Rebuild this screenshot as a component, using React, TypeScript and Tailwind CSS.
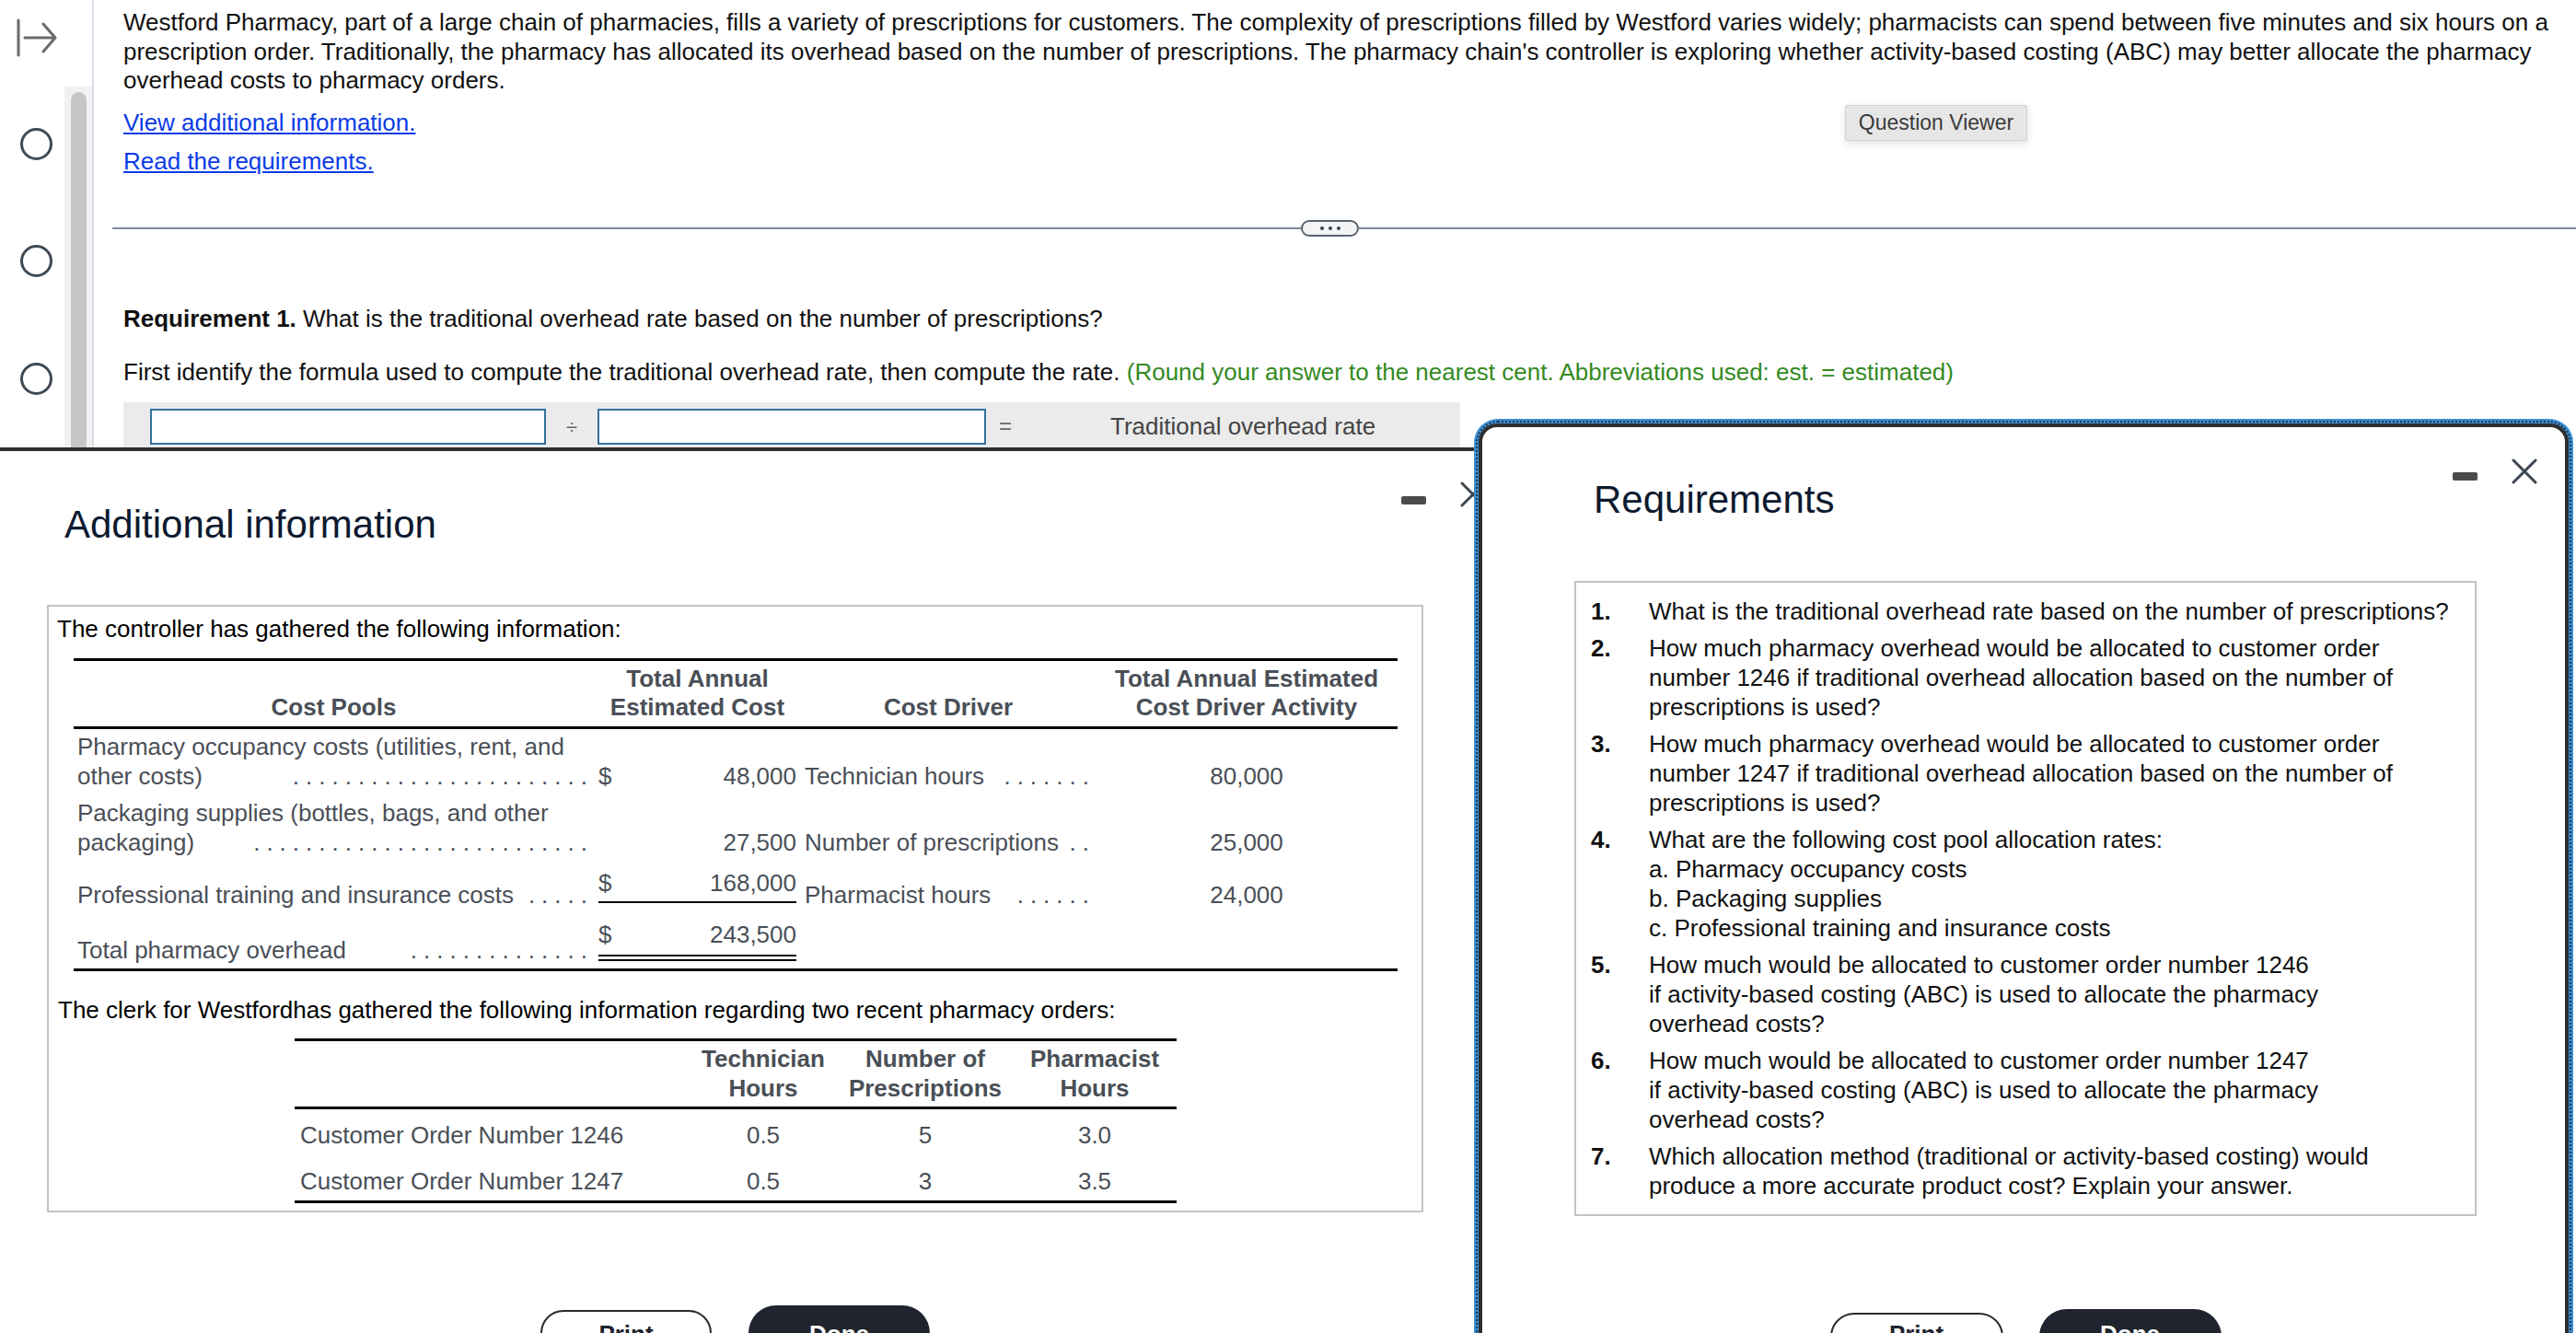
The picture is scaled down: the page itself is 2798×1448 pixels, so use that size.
import React from 'react';

// dotted leader used between a label and its amount
const Leader = ({ n }: { n: number }) => (
  <span className="whitespace-nowrap tracking-[7px]">{'.'.repeat(n)}</span>
);

const CloseIcon = () => (
  <svg width="28" height="28" viewBox="0 0 28 28" fill="none" stroke="#3d4652" strokeWidth="3" strokeLinecap="round">
    <path d="M2 2 L26 26 M26 2 L2 26" />
  </svg>
);

const Minimize = ({ className }: { className: string }) => (
  <div className={`h-[9px] w-[27px] rounded-[2px] bg-[#4b4b4b] ${className}`} />
);

const requirements: { n: string; lines: string[] }[] = [
  { n: '1.', lines: ['What is the traditional overhead rate based on the number of prescriptions?'] },
  {
    n: '2.',
    lines: [
      'How much pharmacy overhead would be allocated to customer order',
      'number 1246 if traditional overhead allocation based on the number of',
      'prescriptions is used?',
    ],
  },
  {
    n: '3.',
    lines: [
      'How much pharmacy overhead would be allocated to customer order',
      'number 1247 if traditional overhead allocation based on the number of',
      'prescriptions is used?',
    ],
  },
  {
    n: '4.',
    lines: [
      'What are the following cost pool allocation rates:',
      'a. Pharmacy occupancy costs',
      'b. Packaging supplies',
      'c. Professional training and insurance costs',
    ],
  },
  {
    n: '5.',
    lines: [
      'How much would be allocated to customer order number 1246',
      'if activity-based costing (ABC) is used to allocate the pharmacy',
      'overhead costs?',
    ],
  },
  {
    n: '6.',
    lines: [
      'How much would be allocated to customer order number 1247',
      'if activity-based costing (ABC) is used to allocate the pharmacy',
      'overhead costs?',
    ],
  },
  {
    n: '7.',
    lines: [
      'Which allocation method (traditional or activity-based costing) would',
      'produce a more accurate product cost? Explain your answer.',
    ],
  },
];

const orders = [
  { name: 'Customer Order Number 1246', tech: '0.5', rx: '5', pharm: '3.0' },
  { name: 'Customer Order Number 1247', tech: '0.5', rx: '3', pharm: '3.5' },
];

const App: React.FC = () => {
  return (
    <div className="relative h-[1448px] w-[2798px] overflow-hidden bg-white font-['Liberation_Sans',Arial,sans-serif] text-[26px] text-black">
      {/* Question page underneath the dialogs */}
      <div className="flex h-full">
        {/* step rail */}
        <div className="flex w-[70px] flex-col items-start">
          <svg className="ml-[18px] mt-[20px]" width="44" height="42" viewBox="0 0 44 42" fill="none" stroke="#6b6b6b" strokeWidth="3" strokeLinecap="round" strokeLinejoin="round">
            <path d="M2 2 V40 M9 21 H42 M29 6 L42 21 L29 36" />
          </svg>
          <div className="ml-[22px] mt-[77px] h-[35px] w-[35px] rounded-full border-[3px] border-[#3f4a55]" />
          <div className="ml-[22px] mt-[92px] h-[35px] w-[35px] rounded-full border-[3px] border-[#3f4a55]" />
          <div className="ml-[22px] mt-[93px] h-[35px] w-[35px] rounded-full border-[3px] border-[#3f4a55]" />
        </div>

        {/* scroll track */}
        <div className="w-[30px] pt-[94px]">
          <div className="h-full bg-[#f1f1f1] pt-[6px]">
            <div className="ml-[7px] h-full w-[17px] rounded-t-full bg-[#c6c6c6]" />
          </div>
        </div>
        <div className="w-[2px] bg-[#dcdce8]" />

        {/* question body */}
        <div className="flex flex-1 flex-col pl-[32px]">
          <p className="whitespace-nowrap pt-[9px] leading-[31.5px] text-[#111]">
            Westford Pharmacy, part of a large chain of pharmacies, fills a variety of prescriptions for customers. The complexity of prescriptions filled by Westford varies widely; pharmacists can spend between five minutes and six hours on a
            <br />
            prescription order. Traditionally, the pharmacy has allocated its overhead based on the number of prescriptions. The pharmacy chain's controller is exploring whether activity-based costing (ABC) may better allocate the pharmacy
            <br />
            overhead costs to pharmacy orders.
          </p>

          <div className="mt-[10px] flex items-start">
            <div className="flex flex-col gap-[10px] pt-[3px] leading-[32px]">
              <a href="#" className="text-[#0a3be6] underline">View additional information.</a>
              <a href="#" className="text-[#0a3be6] underline">Read the requirements.</a>
            </div>
            <button className="ml-auto mr-[596px] h-[39px] w-[198px] rounded-[2px] border border-[#d2d2d2] bg-[#e6e6e6] text-[23px] text-[#3a3a3a] shadow-[0_3px_10px_rgba(0,0,0,0.12)]">
              Question Viewer
            </button>
          </div>

          <div className="-ml-[12px] mt-[48px] flex h-[18px] items-center">
            <div className="h-[2px] w-[1291px] bg-[#7f8893]" />
            <div className="flex h-[18px] w-[63px] items-center justify-center gap-[5px] rounded-full border-2 border-[#5b6570] bg-[#f3f4f6]">
              <span className="h-[4px] w-[4px] rounded-full bg-[#3a4048]" />
              <span className="h-[4px] w-[4px] rounded-full bg-[#3a4048]" />
              <span className="h-[4px] w-[4px] rounded-full bg-[#3a4048]" />
            </div>
            <div className="h-[2px] flex-1 bg-[#7f8893]" />
          </div>

          <p className="mt-[73px] leading-[32px] text-[#111]">
            <span className="font-bold">Requirement 1.</span> What is the traditional overhead rate based on the number of prescriptions?
          </p>
          <p className="mt-[26px] leading-[32px] text-[#111]">
            First identify the formula used to compute the traditional overhead rate, then compute the rate.{' '}
            <span className="text-[#348a1f]">(Round your answer to the nearest cent. Abbreviations used: est. = estimated)</span>
          </p>

          <div className="mt-[17px] flex h-[80px] w-[1452px] items-start bg-[#ebebeb] pl-[29px] pt-[7px]">
            <div className="h-[39px] w-[430px] border-2 border-[#30729b] bg-white" />
            <span className="flex h-[39px] w-[56px] items-center justify-center text-[22px] text-[#666]">÷</span>
            <div className="h-[39px] w-[422px] border-2 border-[#30729b] bg-white" />
            <span className="flex h-[39px] w-[42px] items-center justify-center text-[24px] text-[#666]">=</span>
            <span className="ml-[93px] flex h-[39px] items-center text-[#444]">Traditional overhead rate</span>
          </div>
        </div>
      </div>

      {/* Additional information dialog */}
      <div className="absolute left-0 top-[486px] h-[1000px] w-[1653px] border-t-4 border-[#2f2f2f] bg-white">
        <div className="flex items-start">
          <h2 className="ml-[70px] mt-[57px] text-[42px] leading-[46px] text-[#0c1a30]">Additional information</h2>
          <div className="ml-auto mr-[39px] mt-[33px] flex items-start gap-[37px]">
            <Minimize className="mt-[16px]" />
            <CloseIcon />
          </div>
        </div>

        <div className="ml-[51px] mt-[64px] w-[1495px] border-2 border-[#c3c3c3] pb-[8px]">
          <p className="pl-[9px] pt-[8px] leading-[32px]">The controller has gathered the following information:</p>

          <div className="ml-[27px] mt-[16px] w-[1438px] leading-[32px] text-[#4a4f57]">
            <div className="grid grid-cols-[565px_225px_320px_328px] items-end border-y-[3px] border-black pb-[5px] pt-[4px] font-bold leading-[31px]">
              <div className="text-center">Cost Pools</div>
              <div className="text-center">Total Annual<br />Estimated Cost</div>
              <div className="text-center">Cost Driver</div>
              <div className="text-center">Total Annual Estimated<br />Cost Driver Activity</div>
            </div>

            <div className="grid grid-cols-[565px_225px_320px_328px] items-end pt-[3px]">
              <div className="pl-[4px]">
                <div className="whitespace-nowrap">Pharmacy occupancy costs (utilities, rent, and</div>
                <div className="flex justify-between"><span>other costs)</span><Leader n={23} /></div>
              </div>
              <div className="flex justify-between px-[5px]"><span>$</span><span>48,000</span></div>
              <div className="flex justify-between pl-[4px]"><span>Technician hours</span><Leader n={7} /></div>
              <div className="text-center">80,000</div>
            </div>

            <div className="mt-[8px] grid grid-cols-[565px_225px_320px_328px] items-end">
              <div className="pl-[4px]">
                <div className="whitespace-nowrap">Packaging supplies (bottles, bags, and other</div>
                <div className="flex justify-between"><span>packaging)</span><Leader n={26} /></div>
              </div>
              <div className="flex justify-end px-[5px]"><span>27,500</span></div>
              <div className="flex justify-between whitespace-nowrap pl-[4px]"><span>Number of prescriptions</span><Leader n={2} /></div>
              <div className="text-center">25,000</div>
            </div>

            <div className="mt-[12px] grid grid-cols-[565px_225px_320px_328px] items-end">
              <div className="flex justify-between pl-[4px]"><span className="whitespace-nowrap">Professional training and insurance costs</span><Leader n={5} /></div>
              <div className="mx-[5px] mb-[7px] flex justify-between border-b-2 border-black pb-[4px]"><span>$</span><span>168,000</span></div>
              <div className="flex justify-between pl-[4px]"><span>Pharmacist hours</span><Leader n={6} /></div>
              <div className="text-center">24,000</div>
            </div>

            <div className="mt-[11px] grid grid-cols-[565px_225px_320px_328px] items-end">
              <div className="flex justify-between pl-[4px]"><span>Total pharmacy overhead</span><Leader n={14} /></div>
              <div className="mx-[5px] mb-[4px] flex justify-between border-b-[7px] border-double border-black pb-[6px]"><span>$</span><span>243,500</span></div>
              <div />
              <div />
            </div>

            <div className="mt-[4px] h-[3px] bg-black" />
          </div>

          <p className="mt-[26px] pl-[10px] leading-[32px]">The clerk for Westfordhas gathered the following information regarding two recent pharmacy orders:</p>

          <div className="ml-[267px] mt-[15px] w-[958px] leading-[32px] text-[#4a4f57]">
            <div className="grid grid-cols-[428px_162px_190px_178px] items-end border-y-[3px] border-black pb-[4px] pt-[3px] font-bold">
              <div />
              <div className="text-center">Technician<br />Hours</div>
              <div className="text-center">Number of<br />Prescriptions</div>
              <div className="text-center">Pharmacist<br />Hours</div>
            </div>
            {orders.map((o, i) => (
              <div key={o.name} className={`grid grid-cols-[428px_162px_190px_178px] ${i === 0 ? 'mt-[12px]' : 'mt-[18px]'}`}>
                <div className="pl-[6px]">{o.name}</div>
                <div className="text-center">{o.tech}</div>
                <div className="text-center">{o.rx}</div>
                <div className="text-center">{o.pharm}</div>
              </div>
            ))}
            <div className="mt-[5px] h-[3px] bg-black" />
          </div>
        </div>

        <div className="ml-[51px] mt-[101px] flex w-[1495px] items-start justify-center gap-[40px] font-semibold leading-[32px]">
          <button className="mt-[5px] flex h-[50px] w-[186px] items-start justify-center rounded-full border-2 border-[#2b2b2b] bg-white pt-[8px] text-[#1f242e]">Print</button>
          <button className="flex h-[60px] w-[197px] items-start justify-center rounded-full bg-[#1f242e] pt-[15px] text-white">Done</button>
        </div>
      </div>

      {/* Requirements dialog */}
      <div className="absolute left-[1601px] top-[455px] h-[1010px] w-[1194px] rounded-t-[26px] border-2 border-b-0 border-[#3b8fd6] bg-[#3b8fd6]">
        <div className="h-full rounded-t-[24px] border-2 border-b-0 border-dotted border-[#263544] bg-[#3b8fd6] px-px pt-px">
          <div className="h-full rounded-t-[20px] border-4 border-b-0 border-[#2e2e2e] bg-white">
            <div className="flex items-start">
              <h2 className="ml-[121px] mt-[56px] text-[42px] leading-[46px] text-[#0c1a30]">Requirements</h2>
              <div className="ml-auto mr-[30px] mt-[34px] flex items-start gap-[37px]">
                <Minimize className="mt-[15px]" />
                <CloseIcon />
              </div>
            </div>

            <div className="ml-[100px] mt-[65px] w-[980px] border-2 border-[#c3c3c3] pb-[15px] pl-[16px] pt-[15px]">
              <ol className="flex flex-col gap-[8px] leading-[32px] text-[#111]">
                {requirements.map((r) => (
                  <li key={r.n} className="flex">
                    <span className="w-[63px] font-bold">{r.n}</span>
                    <div>
                      {r.lines.map((l) => (
                        <div key={l} className="whitespace-nowrap">{l}</div>
                      ))}
                    </div>
                  </li>
                ))}
              </ol>
            </div>

            <div className="ml-[100px] mt-[101px] flex w-[980px] items-start justify-center gap-[39px] font-semibold leading-[32px]">
              <button className="mt-[4px] flex h-[52px] w-[188px] items-start justify-center rounded-full border-2 border-[#2b2b2b] bg-white pt-[5px] text-[#1f242e]">Print</button>
              <button className="flex h-[60px] w-[198px] items-start justify-center rounded-full bg-[#1f242e] pt-[11px] text-white">Done</button>
            </div>
          </div>
        </div>
      </div>
    </div>
  );
};

export default App;
